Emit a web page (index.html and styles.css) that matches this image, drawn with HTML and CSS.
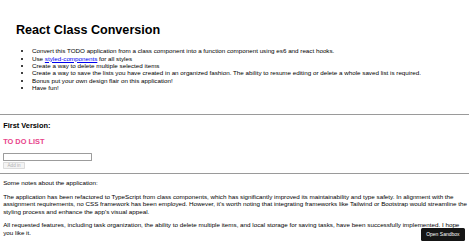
FILE: index.html
```html
<!DOCTYPE html>
<html lang="en">
<head>
<meta charset="utf-8">
<title>React Class Conversion</title>
<link rel="stylesheet" href="styles.css">
</head>
<body>
<section class="intro">
  <h1 class="title">React Class Conversion</h1>
  <ul class="tasks">
    <li>Convert this TODO application from a class component into a function component using es6 and react hooks.</li>
    <li>Use <a href="#" class="link">styled-components</a> for all styles</li>
    <li>Create a way to delete multiple selected items</li>
    <li>Create a way to save the lists you have created in an organized fashion. The ability to resume editing or delete a whole saved list is required.</li>
    <li>Bonus put your own design flair on this application!</li>
    <li>Have fun!</li>
  </ul>
</section>
<hr class="rule">
<section class="version">
  <h3 class="version-title">First Version:</h3>
  <h3 class="todo-title">TO DO LIST</h3>
  <form class="todo-form">
    <input class="todo-input" type="text">
    <button class="todo-button" type="button" disabled>Add in</button>
  </form>
</section>
<hr class="rule">
<section class="notes">
  <p>Some notes about the application:</p>
  <p>The application has been refactored to TypeScript from class components, which has significantly improved its maintainability and type safety. In alignment with the assignment requirements, no CSS framework has been employed. However, it's worth noting that integrating frameworks like Tailwind or Bootstrap would streamline the styling process and enhance the app's visual appeal.</p>
  <p>All requested features, including task organization, the ability to delete multiple items, and local storage for saving tasks, have been successfully implemented. I hope you like it.</p>
</section>
<a class="sandbox" href="#">Open Sandbox</a>
</body>
</html>
```

FILE: styles.css
```css
html, body {
  margin: 0;
  padding: 0;
  background: #ffffff;
}
body {
  font-family: "Liberation Sans", Arial, sans-serif;
  font-size: 6.25px;
  line-height: 7.36px;
  color: #000000;
  padding: 0 3px 0 3.2px;
  overflow: hidden;
}
.intro {
  padding: 23.4px 12.8px 16px;
}
.title {
  font-size: 12.6px;
  line-height: 14.7px;
  font-weight: bold;
  margin: 0 0 9.2px;
}
.tasks {
  margin: 0 0 6.4px;
  padding-left: 16px;
}
.link {
  color: #0000ee;
  text-decoration: underline;
}
.rule {
  height: 0;
  border: 0;
  border-top: 1.5px solid #9a9a9a;
  margin: 0 2px 0 -3.2px;
}
.version {
  padding-top: 7.4px;
}
.version-title,
.todo-title {
  font-size: 7.4px;
  line-height: 8.6px;
  font-weight: bold;
  margin: 0 0 7.2px;
}
.todo-title {
  color: #e8448b;
  margin-bottom: 6.3px;
}
.todo-form {
  display: flex;
  flex-direction: column;
  align-items: flex-start;
  gap: 0.8px;
  padding-bottom: 4px;
}
.todo-input {
  box-sizing: border-box;
  width: 88.5px;
  height: 8px;
  margin: 0;
  padding: 0;
  border: 0.8px solid #9c9c9c;
  border-radius: 0.6px;
  background: #fff;
}
.todo-button {
  box-sizing: border-box;
  width: 21.7px;
  height: 7px;
  margin: 0;
  padding: 0;
  font-family: "Liberation Sans", Arial, sans-serif;
  font-size: 4.6px;
  line-height: 5px;
  color: #b0b0b0;
  background: #f4f4f4;
  border: 0.6px solid #dcdcdc;
  border-radius: 0.8px;
}
.notes {
  padding-top: 5.4px;
}
.notes p {
  margin: 0 0 6.4px;
}
.sandbox {
  position: fixed;
  right: 9px;
  bottom: 7.3px;
  width: 44.3px;
  height: 13px;
  display: flex;
  align-items: center;
  justify-content: center;
  background: #151515;
  color: #ffffff;
  font-size: 5px;
  text-decoration: none;
  border-radius: 1.5px;
}
```
